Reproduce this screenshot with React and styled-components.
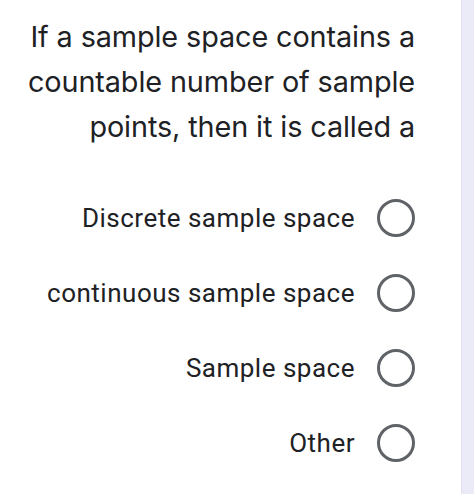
import React from "react";
import styled, { createGlobalStyle } from "styled-components";

const Global = createGlobalStyle`
  html, body { margin: 0; padding: 0; background: #ffffff; }
  body { width: 474px; height: 499px; overflow: hidden; }
`;

const Page = styled.div`
  display: flex;
  width: 474px;
  height: 499px;
  background: #ffffff;
`;

const Main = styled.div`
  flex: 1;
  display: flex;
  flex-direction: column;
  padding: 14px 46px 0 0;
`;

const SideBar = styled.div`
  width: 12px;
  height: 494px;
  background: #ebeaf7;
  border-left: 1px solid #e2e0f0;
`;

const Question = styled.div`
  font-family: "Inter", "Open Sans", sans-serif;
  font-size: 28.8px;
  line-height: 45px;
  color: #202124;
  text-align: right;
  letter-spacing: -0.1px;
`;

const Options = styled.div`
  display: flex;
  flex-direction: column;
  margin-top: 31px;
`;

const Row = styled.label`
  display: flex;
  align-items: center;
  justify-content: flex-end;
  gap: 22px;
  height: 75px;
`;

const OptionText = styled.span`
  font-family: "Roboto", sans-serif;
  font-size: 26px;
  color: #202124;
  letter-spacing: 0.5px;
`;

const Radio = styled.span`
  width: 32px;
  height: 32px;
  border: 3px solid #5f6368;
  border-radius: 50%;
  flex: none;
`;

const options = [
  "Discrete sample space",
  "continuous sample space",
  "Sample space",
  "Other",
];

export default function App() {
  return (
    <Page>
      <Global />
      <Main>
        <Question>
          If a sample space contains a<br />
          countable number of sample<br />
          points, then it is called a
        </Question>
        <Options>
          {options.map((o) => (
            <Row key={o}>
              <OptionText>{o}</OptionText>
              <Radio />
            </Row>
          ))}
        </Options>
      </Main>
      <SideBar />
    </Page>
  );
}
